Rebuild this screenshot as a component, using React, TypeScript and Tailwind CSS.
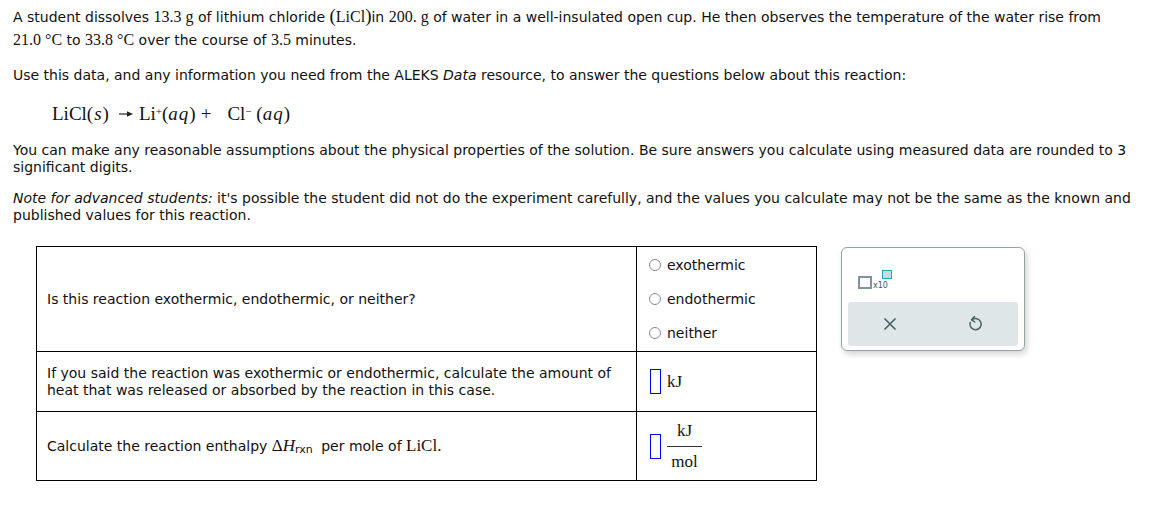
import React from "react";

const SERIF = "font-['Liberation_Serif','Times_New_Roman',serif]";

function M({ children, className = "" }: { children: React.ReactNode; className?: string }) {
  return <span className={`${SERIF} whitespace-nowrap text-[16px] leading-[16px] ${className}`}>{children}</span>;
}

function Radio({ label }: { label: string }) {
  return (
    <div className="flex h-[34px] items-center gap-[6px]">
      <span className="h-[12px] w-[12px] rounded-full border border-[#8a8a8a] bg-white" />
      <span>{label}</span>
    </div>
  );
}

function AnswerBox() {
  return <span className="inline-block h-[25px] w-[11px] border border-[#0000ee]" />;
}

function ToolPanel() {
  return (
    <div className="ml-[24px] mt-[1px] h-[104px] w-[184px] rounded-[6px] border border-[#8fa5aa] bg-white p-[6px] shadow-[2px_3px_6px_rgba(0,0,0,0.18)]">
      <div className="relative h-[48px]">
        {/* x10 superscript tool */}
        <span className="absolute left-[10px] top-[22px] h-[13px] w-[14px] border-2 border-[#7e959b]" />
        <span className="absolute left-[25px] top-[26px] font-['DejaVu_Sans',sans-serif] text-[8px] text-[#44575c]">x10</span>
        <span className="absolute left-[34px] top-[16px] h-[9px] w-[10px] border border-[#2aa0b3] bg-[#b8e2ea]" />
      </div>
      <div className="flex h-[44px] items-center justify-around rounded-[3px] bg-[#dfe6e8]">
        <svg width="14" height="14" viewBox="0 0 14 14" fill="none" stroke="#4b5f66" strokeWidth="1.6">
          <path d="M1.5 1.5 L12.5 12.5 M12.5 1.5 L1.5 12.5" />
        </svg>
        <svg width="16" height="18" viewBox="0 0 16 18" fill="none" stroke="#4b5f66" strokeWidth="1.5" strokeLinecap="round" strokeLinejoin="round">
          <path d="M5 4.8 A5.6 5.6 0 1 1 3.2 7.5" />
          <path d="M7.5 1.5 L4.6 4.8 L7.8 7" />
        </svg>
      </div>
    </div>
  );
}

export default function App() {
  return (
    <div className="min-h-[506px] w-[1175px] bg-white px-[13px] pt-[6px] font-['DejaVu_Sans','Verdana',sans-serif] text-[14px] text-[#111]">
      <div className="w-[1140px]">
        <p className="leading-[23px]">
          A student dissolves <M>13.3 g</M> of lithium chloride <M className="text-[19px]">(</M><M>LiCl</M><M className="text-[19px]">)</M>in <M>200. g</M> of water in a well-insulated open cup. He then observes the temperature of the water rise from{" "}
          <M>21.0 °C</M> to <M>33.8 °C</M> over the course of <M>3.5</M> minutes.
        </p>
        <p className="mt-[15px] leading-[17px]">
          Use this data, and any information you need from the ALEKS <i>Data</i> resource, to answer the questions below about this reaction:
        </p>
        <div className={`mt-[17px] flex items-center pl-[39px] ${SERIF} text-[19px] leading-[26px]`}>
          <span>
            LiCl(<i className="mx-[1px]">s</i>)
          </span>
          <span className="ml-[10px] mr-[5px] inline-flex items-center">
            <svg width="15" height="8" viewBox="0 0 15 8">
              <path d="M0 4 H10" stroke="#222" strokeWidth="1.2" />
              <path d="M8 1.2 L14 4 L8 6.8 Z" fill="#222" />
            </svg>
          </span>
          <span>
            Li<sup className="text-[11px]">+</sup>(<i className="tracking-[1px]">aq</i>)
          </span>
          <span className="ml-[5px] mr-[16px]">+</span>
          <span>
            Cl<sup className="text-[11px]">−</sup> (<i className="tracking-[1px]">aq</i>)
          </span>
        </div>
        <p className="mt-[15px] leading-[17px]">
          You can make any reasonable assumptions about the physical properties of the solution. Be sure answers you calculate using measured data are rounded to 3 significant digits.
        </p>
        <p className="mt-[14px] leading-[17px]">
          <i>Note for advanced students:</i> it's possible the student did not do the experiment carefully, and the values you calculate may not be the same as the known and published values for this reaction.
        </p>
      </div>
      <div className="mt-[22px] flex items-start">
        <table className="ml-[23px] w-[781px] border-collapse">
          <tbody>
            <tr className="h-[105px]">
              <td className="w-[600px] border border-black px-[10px] align-middle">Is this reaction exothermic, endothermic, or neither?</td>
              <td className="border border-black px-[12px] pt-[1px] align-top">
                <Radio label="exothermic" />
                <Radio label="endothermic" />
                <Radio label="neither" />
              </td>
            </tr>
            <tr className="h-[60px]">
              <td className="border border-black px-[10px] leading-[17px]">
                If you said the reaction was exothermic or endothermic, calculate the amount of heat that was released or absorbed by the reaction in this case.
              </td>
              <td className="border border-black px-[13px]">
                <div className="flex items-center gap-[6px]">
                  <AnswerBox />
                  <M className="text-[17px]">kJ</M>
                </div>
              </td>
            </tr>
            <tr className="h-[69px]">
              <td className="border border-black px-[10px]">
                Calculate the reaction enthalpy <M className="text-[17px]">Δ<i>H</i></M>
                <sub className="relative top-[2px] mr-[4px] text-[11px]">rxn</sub> per mole of <M className="text-[17px]">LiCl.</M>
              </td>
              <td className="border border-black px-[13px]">
                <div className="flex items-center gap-[6px]">
                  <AnswerBox />
                  <div className={`flex flex-col items-center ${SERIF} text-[17px] leading-[17px]`}>
                    <span className="px-[2px] pb-[7px]">kJ</span>
                    <span className="h-px w-[35px] bg-[#333]" />
                    <span className="pt-[6px]">mol</span>
                  </div>
                </div>
              </td>
            </tr>
          </tbody>
        </table>
        <ToolPanel />
      </div>
    </div>
  );
}
